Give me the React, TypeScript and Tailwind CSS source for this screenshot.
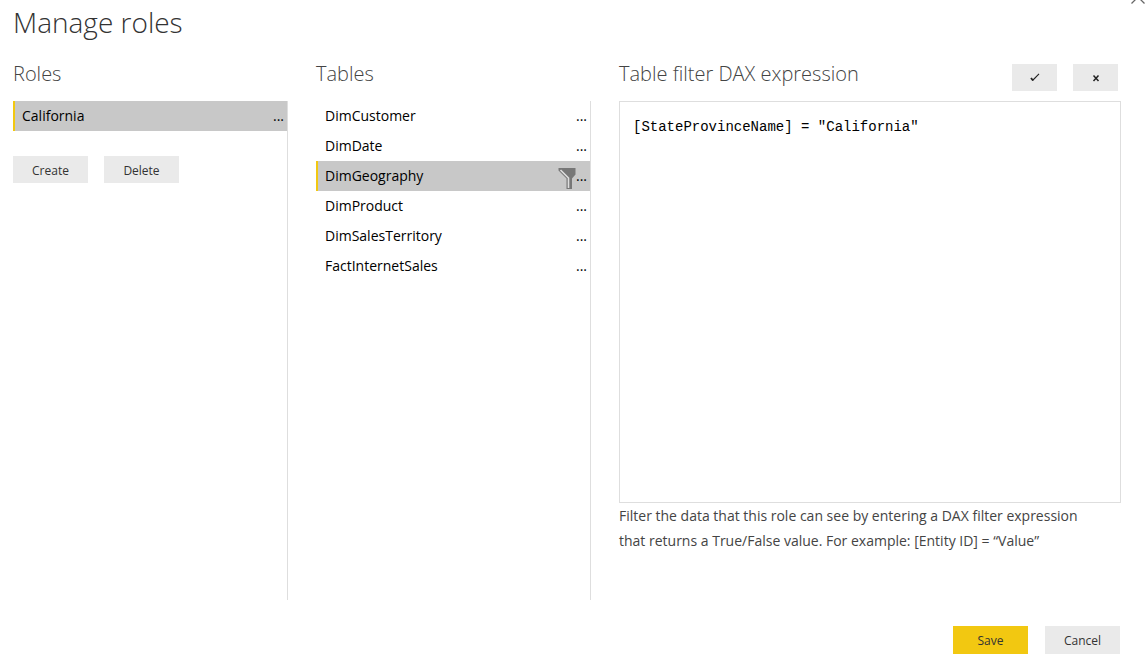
import React, { useState } from 'react';
import clsx from 'clsx';

interface ListRowProps {
  name: string;
  selected: boolean;
  filtered?: boolean;
  onSelect: () => void;
}

const TABLES = [
  'DimCustomer',
  'DimDate',
  'DimGeography',
  'DimProduct',
  'DimSalesTerritory',
  'FactInternetSales',
];

const FilterIcon = () => (
  <svg viewBox="0 0 18 21" className="mt-1 h-[21px] w-[18px] shrink-0" aria-label="Filtered">
    <path d="M0.5 0h17v6.5l-3.5 4v10.5h-5.5v-10.5l-8-8z" fill="#777" />
    <path d="M2.5 2l8 8v10" fill="none" stroke="#dedede" strokeWidth="1.6" />
  </svg>
);

const ListRow: React.FC<ListRowProps> = ({ name, selected, filtered, onSelect }) => (
  <li
    className={clsx(
      'flex h-[30px] items-center border-l-2 pl-[7px] pr-[3px] text-sm text-black',
      selected ? 'border-[#f2c811] bg-[#c8c8c8]' : 'border-transparent'
    )}
  >
    <button type="button" onClick={onSelect} className="min-w-0 flex-1 truncate text-left">
      {name}
    </button>
    {filtered && <FilterIcon />}
    <button type="button" aria-label={`More options for ${name}`}>
      ...
    </button>
  </li>
);

const buttonClass = 'flex items-center justify-center text-xs text-[#333]';
const headingClass = 'text-xl leading-5 font-light text-[#444]';

export default function App() {
  const [table, setTable] = useState('DimGeography');
  const [expression, setExpression] = useState('[StateProvinceName] = "California"');

  return (
    <div className="relative flex min-h-screen flex-col overflow-hidden bg-white pb-3 pl-[13px] pr-[27px] font-['Open_Sans',sans-serif] text-[#333]">
      <button type="button" aria-label="Close" className="absolute -top-2.5 right-[3px]">
        <svg viewBox="0 0 14 14" className="size-3.5">
          <path d="M0.5 0.5l13 13M13.5 0.5l-13 13" stroke="#666" strokeWidth="1.3" fill="none" />
        </svg>
      </button>

      <h1 className="pt-[3px] text-[28px] leading-[38px] font-light">Manage roles</h1>

      <div className="grid flex-1 grid-cols-[275fr_275fr_502fr] gap-x-7 pt-[23px]">
        <section className="flex flex-col">
          <h2 className={clsx(headingClass, 'h-[37px]')}>Roles</h2>
          <div className="flex-1 border-r border-[#dedede]">
            <ul>
              <ListRow name="California" selected onSelect={() => {}} />
            </ul>
            <div className="flex gap-4 pt-[25px]">
              <button type="button" className={clsx(buttonClass, 'h-[27px] w-[75px] bg-[#eaeaea] pt-0.5')}>
                Create
              </button>
              <button type="button" className={clsx(buttonClass, 'h-[27px] w-[75px] bg-[#eaeaea] pt-0.5')}>
                Delete
              </button>
            </div>
          </div>
        </section>

        <section className="flex flex-col">
          <h2 className={clsx(headingClass, 'h-[37px]')}>Tables</h2>
          <ul className="flex-1 border-r border-[#dedede]">
            {TABLES.map(name => (
              <ListRow
                key={name}
                name={name}
                selected={name === table}
                filtered={name === 'DimGeography'}
                onSelect={() => setTable(name)}
              />
            ))}
          </ul>
        </section>

        <section className="flex flex-col">
          <div className="flex h-[37px] justify-between">
            <label htmlFor="dax" className={headingClass}>
              Table filter DAX expression
            </label>
            <div className="flex gap-4 pr-[3px]">
              <button type="button" aria-label="Accept" className={clsx(buttonClass, 'h-[27px] w-[45px] bg-[#eaeaea]')}>
                <svg viewBox="0 0 10 10" className="size-2.5">
                  <path d="M1 5l2 2.5" fill="none" stroke="#222" strokeWidth="1.8" />
                  <path d="M2.5 7.5L9 0.8" fill="none" stroke="#222" strokeWidth="1.1" />
                </svg>
              </button>
              <button type="button" aria-label="Discard" className={clsx(buttonClass, 'h-[27px] w-[45px] bg-[#eaeaea]')}>
                <svg viewBox="0 0 10 10" className="size-2.5">
                  <path d="M2.5 2.5l5 5.5M7.5 2.5l-5 5.5" fill="none" stroke="#222" strokeWidth="1.5" />
                </svg>
              </button>
            </div>
          </div>
          <textarea
            id="dax"
            value={expression}
            onChange={e => setExpression(e.target.value)}
            spellCheck={false}
            className="flex-1 resize-none border border-[#dedede] px-[13px] py-[15px] font-['Liberation_Mono',monospace] text-sm leading-5 text-black outline-none"
          />
          <p className="pr-7 pb-[47px] text-sm leading-[25px] text-[#444]">
            Filter the data that this role can see by entering a DAX filter expression that returns a
            True/False value. For example: [Entity ID] = “Value”
          </p>
        </section>
      </div>

      <footer className="flex justify-end gap-[17px] pt-[26px] pr-px">
        <button type="button" className={clsx(buttonClass, 'h-7 w-[75px] bg-[#f2c811] pt-0.5')}>
          Save
        </button>
        <button type="button" className={clsx(buttonClass, 'h-7 w-[75px] bg-[#eaeaea] pt-0.5')}>
          Cancel
        </button>
      </footer>
    </div>
  );
}
